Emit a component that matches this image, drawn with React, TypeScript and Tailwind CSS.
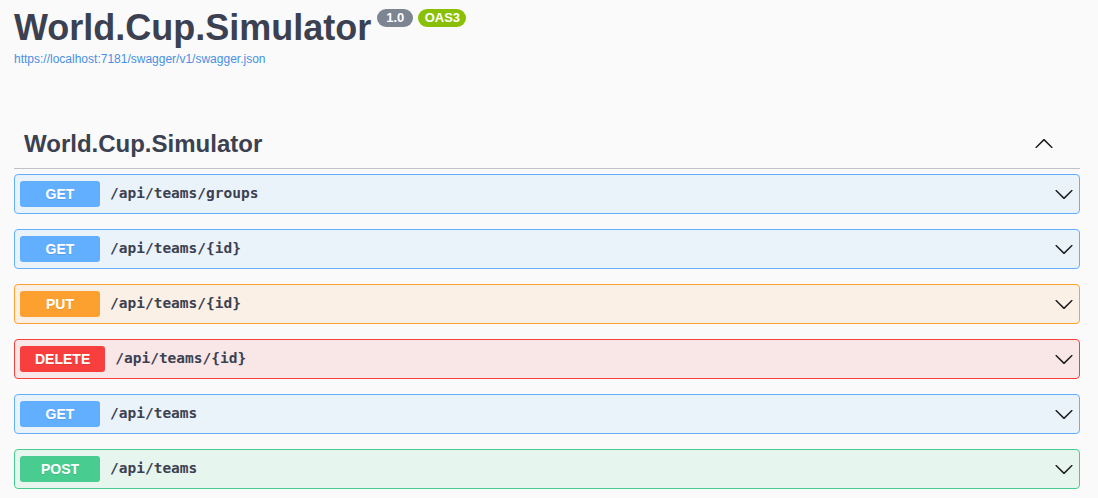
import React from "react";

const arrowPath =
  "M17.418 6.109c.272-.268.709-.268.979 0s.271.701 0 .969l-7.908 7.83c-.27.268-.707.268-.979 0l-7.908-7.83c-.27-.268-.27-.701 0-.969.271-.268.709-.268.979 0L10 13.25l7.418-7.141z";

function Arrow({ up = false }: { up?: boolean }) {
  return (
    <svg
      width="20"
      height="20"
      viewBox="0 0 20 20"
      className={up ? "rotate-180" : ""}
      fill="#1b1b1b"
    >
      <path d={arrowPath} />
    </svg>
  );
}

const ops = [
  { method: "GET", path: "/api/teams/groups", box: "border-[#61affe] bg-[rgba(97,175,254,0.1)]", badge: "bg-[#61affe]" },
  { method: "GET", path: "/api/teams/{id}", box: "border-[#61affe] bg-[rgba(97,175,254,0.1)]", badge: "bg-[#61affe]" },
  { method: "PUT", path: "/api/teams/{id}", box: "border-[#fca130] bg-[rgba(252,161,48,0.1)]", badge: "bg-[#fca130]" },
  { method: "DELETE", path: "/api/teams/{id}", box: "border-[#f93e3e] bg-[rgba(249,62,62,0.1)]", badge: "bg-[#f93e3e]" },
  { method: "GET", path: "/api/teams", box: "border-[#61affe] bg-[rgba(97,175,254,0.1)]", badge: "bg-[#61affe]" },
  { method: "POST", path: "/api/teams", box: "border-[#49cc90] bg-[rgba(73,204,144,0.1)]", badge: "bg-[#49cc90]" },
];

export default function App() {
  return (
    <div className="min-h-screen bg-[#fafafa] font-['Liberation_Sans',Arial,sans-serif] text-[#3b4151]">
      <div className="w-[1080px] pl-[14px] pt-[7px]">
        {/* Info header */}
        <div className="flex items-start">
          <h1 className="text-[36px] font-bold leading-[41px]">World.Cup.Simulator</h1>
          <span className="ml-[6px] mt-[2px] flex h-[18px] w-[36px] items-center justify-center rounded-full bg-[#7d8492] text-[13px] font-bold text-white">
            1.0
          </span>
          <span className="ml-[5px] mt-[2px] flex h-[18px] w-[48px] items-center justify-center rounded-full bg-[#89bf04] text-[13px] font-bold text-white">
            OAS3
          </span>
        </div>
        <a className="mt-[4px] block text-[12px] leading-[14px] text-[#4990e2]">
          https://localhost:7181/swagger/v1/swagger.json
        </a>

        {/* Tag section */}
        <div className="mt-[54px] flex items-center border-b border-[rgba(59,65,81,0.3)] py-[10px] pl-[10px] pr-[26px]">
          <h3 className="text-[24px] font-bold leading-[28px]">World.Cup.Simulator</h3>
          <div className="ml-auto">
            <Arrow up />
          </div>
        </div>

        <div className="mt-[5px]">
          {ops.map((op, i) => (
            <div
              key={i}
              className={`mb-[15px] flex h-[40px] items-center rounded-[4px] border px-[5px] ${op.box}`}
            >
              <span
                className={`flex h-[26px] min-w-[80px] items-center justify-center rounded-[3px] px-[15px] text-[14px] font-bold text-white [text-shadow:0_1px_0_rgba(0,0,0,0.1)] ${op.badge}`}
              >
                {op.method}
              </span>
              <span className="pl-[10px] font-['DejaVu_Sans_Mono',monospace] text-[14.5px] font-bold text-[#3b4151]">
                {op.path}
              </span>
              <div className="ml-auto">
                <Arrow />
              </div>
            </div>
          ))}
        </div>
      </div>
    </div>
  );
}
